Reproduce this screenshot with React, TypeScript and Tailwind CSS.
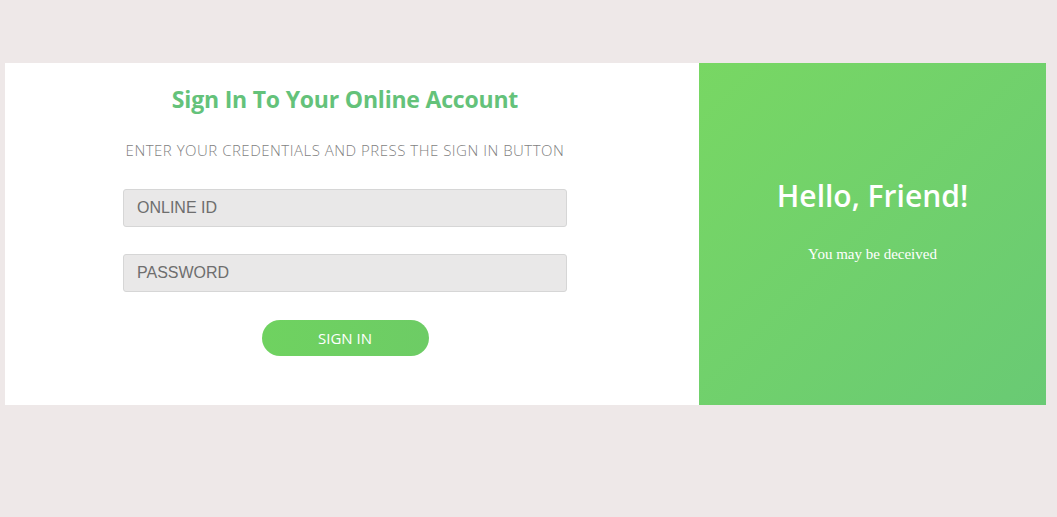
import React from "react";

const uiFont = { fontFamily: '"Open Sans", "Noto Sans", Arial, sans-serif' };

export default function App() {
  return (
    <div className="min-h-screen w-full bg-[#eee8e8] pt-[63px] pl-[5px] pr-[11px]">
      <div className="flex h-[342px] w-full">
        {/* Sign-in form */}
        <div className="flex-1 bg-white pl-[118px]" style={uiFont}>
          <div className="flex w-[444px] flex-col items-center">
            <h1 className="mt-[21px] text-[23px] font-bold leading-[30px] tracking-[-0.2px] text-[#64c27a]">
              Sign In To Your Online Account
            </h1>
            <p className="mt-[26px] text-[15px] font-light leading-[20px] tracking-[0.5px] text-[#7f7f7f]">
              ENTER YOUR CREDENTIALS AND PRESS THE SIGN IN BUTTON
            </p>
            <input
              placeholder="ONLINE ID"
              className="mt-[29px] h-[38px] w-full rounded-[3px] border border-[#d6d6d6] bg-[#e9e8e8] px-[13px] text-[16px] text-[#666] placeholder:text-[#6e6e6e] outline-none"
              style={{ fontFamily: '"Liberation Sans", Arial, sans-serif' }}
            />
            <input
              type="password"
              placeholder="PASSWORD"
              className="mt-[27px] h-[38px] w-full rounded-[3px] border border-[#d6d6d6] bg-[#e9e8e8] px-[13px] text-[16px] text-[#666] placeholder:text-[#6e6e6e] outline-none"
              style={{ fontFamily: '"Liberation Sans", Arial, sans-serif' }}
            />
            <button className="mt-[28px] h-[36px] w-[167px] rounded-full bg-gradient-to-r from-[#6fd260] to-[#6dcc65] text-[15px] text-white">
              SIGN IN
            </button>
          </div>
        </div>

        {/* Welcome panel */}
        <div className="flex w-[347px] flex-col items-center bg-gradient-to-br from-[#78d763] to-[#69ca74] text-white">
          <h2 className="mt-[113px] text-[30px] font-semibold leading-[40px]" style={uiFont}>
            Hello, Friend!
          </h2>
          <p
            className="mt-[28px] text-[15px] leading-[20px]"
            style={{ fontFamily: '"Liberation Serif", "Times New Roman", serif' }}
          >
            You may be deceived
          </p>
        </div>
      </div>
    </div>
  );
}
